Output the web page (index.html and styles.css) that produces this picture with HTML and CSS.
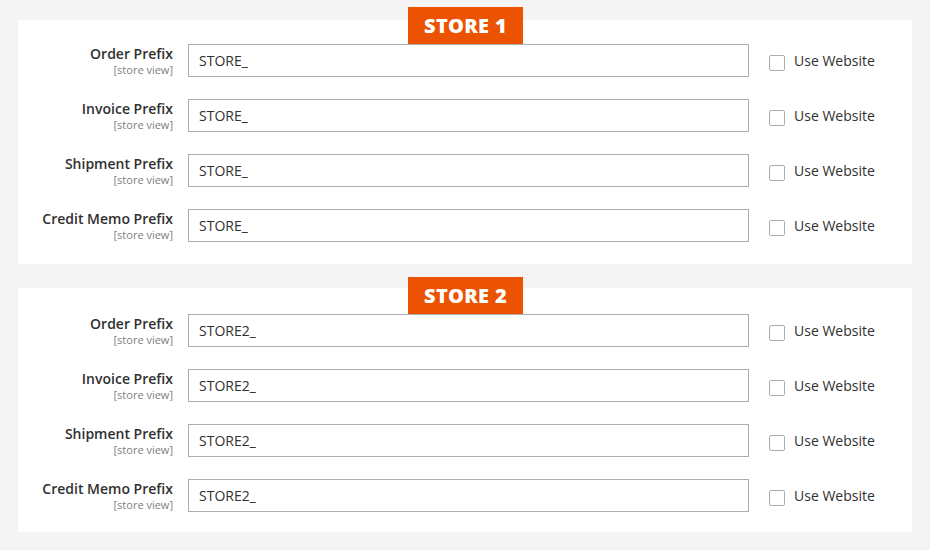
FILE: index.html
```html
<!DOCTYPE html>
<html>
<head>
<meta charset="utf-8">
<link rel="stylesheet" href="styles.css">
</head>
<body>
<section class="panel">
  <div class="badge">STORE 1</div>
  <div class="row">
    <div class="label"><span class="name">Order Prefix</span><span class="scope">[store view]</span></div>
    <div class="input">STORE_</div>
    <label class="use"><span class="box"></span>Use Website</label>
  </div>
  <div class="row">
    <div class="label"><span class="name">Invoice Prefix</span><span class="scope">[store view]</span></div>
    <div class="input">STORE_</div>
    <label class="use"><span class="box"></span>Use Website</label>
  </div>
  <div class="row">
    <div class="label"><span class="name">Shipment Prefix</span><span class="scope">[store view]</span></div>
    <div class="input">STORE_</div>
    <label class="use"><span class="box"></span>Use Website</label>
  </div>
  <div class="row">
    <div class="label"><span class="name">Credit Memo Prefix</span><span class="scope">[store view]</span></div>
    <div class="input">STORE_</div>
    <label class="use"><span class="box"></span>Use Website</label>
  </div>
</section>
<section class="panel panel-second">
  <div class="badge">STORE 2</div>
  <div class="row">
    <div class="label"><span class="name">Order Prefix</span><span class="scope">[store view]</span></div>
    <div class="input">STORE2_</div>
    <label class="use"><span class="box"></span>Use Website</label>
  </div>
  <div class="row">
    <div class="label"><span class="name">Invoice Prefix</span><span class="scope">[store view]</span></div>
    <div class="input">STORE2_</div>
    <label class="use"><span class="box"></span>Use Website</label>
  </div>
  <div class="row">
    <div class="label"><span class="name">Shipment Prefix</span><span class="scope">[store view]</span></div>
    <div class="input">STORE2_</div>
    <label class="use"><span class="box"></span>Use Website</label>
  </div>
  <div class="row">
    <div class="label"><span class="name">Credit Memo Prefix</span><span class="scope">[store view]</span></div>
    <div class="input">STORE2_</div>
    <label class="use"><span class="box"></span>Use Website</label>
  </div>
</section>
</body>
</html>
```
FILE: styles.css
```css
* { box-sizing: border-box; }
html, body { margin: 0; }
body {
  background: #f4f4f4;
  padding: 20px 18px 18px;
  font-family: "Open Sans", "Liberation Sans", sans-serif;
  color: #303030;
  display: flex;
  flex-direction: column;
  gap: 24px;
}
.panel {
  position: relative;
  background: #fff;
  padding: 24px 0 22px;
  display: flex;
  flex-direction: column;
  gap: 22px;
}
.panel-second { padding: 26px 0 20px; }
.badge {
  position: absolute;
  left: 390px;
  bottom: 100%;
  margin-bottom: -24px;
  width: 115px;
  height: 37px;
  background: #eb5202;
  color: #fff;
  font-family: "Open Sans", sans-serif;
  font-weight: 800;
  font-size: 20px;
  line-height: 38px;
  text-align: center;
  letter-spacing: 0.3px;
}
.panel-second .badge { margin-bottom: -26px; }
.row {
  display: grid;
  grid-template-columns: 155px 561px auto;
  column-gap: 15px;
  height: 33px;
}
.label {
  display: flex;
  flex-direction: column;
  align-items: flex-end;
  text-align: right;
  padding-top: 2px;
}
.name {
  font-size: 14px;
  font-weight: 600;
  line-height: 16px;
}
.scope {
  margin-top: 1px;
  font-size: 11px;
  line-height: 13px;
  color: #808080;
}
.input {
  border: 1px solid #adadad;
  height: 33px;
  padding: 0 10px;
  font-size: 14px;
  line-height: 31px;
  color: #303030;
}
.use {
  margin-left: 5px;
  display: flex;
  align-items: center;
  gap: 9px;
  font-size: 14px;
  line-height: 33px;
  height: 33px;
}
.box {
  width: 16px;
  height: 16px;
  border: 1px solid #adadad;
  border-radius: 2px;
  background: #fff;
  margin-top: 4px;
}
```
